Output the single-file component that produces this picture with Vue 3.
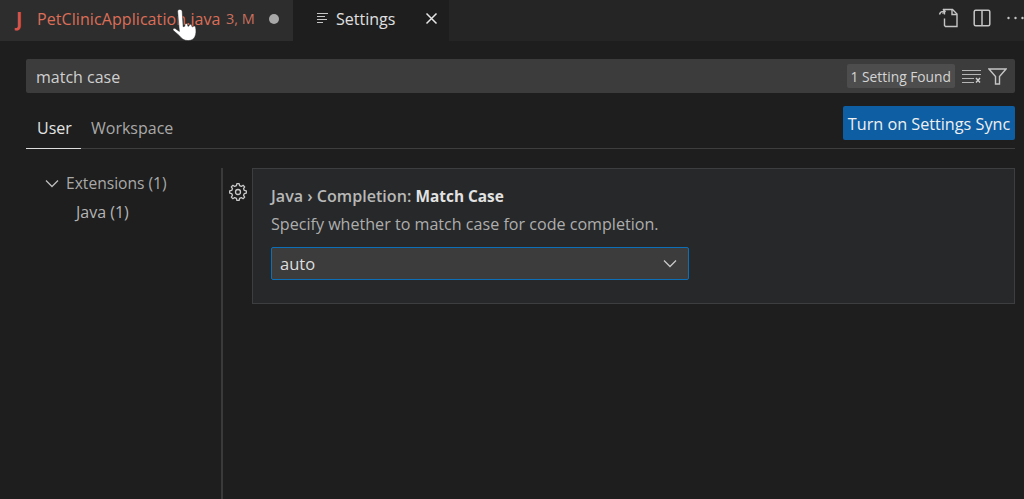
<script setup>
const cursorPath = 'M6.2 1.200c1.200-.2 2 .5 2.100 1.700L9 15.500l1.200-.4.2-1.600c.3-.9 1.600-.9 1.900.1l.2 1.500.8-.1.2-.9c.4-.8 1.500-.7 1.800.2l.3 1.200.7.1.3-.4c.5-.6 1.400-.3 1.600.6.5 3 .5 5.800-.6 8.200-.9 1.800-2.600 3-4.900 3-3.100 0-4.900-1.600-6.500-4.100L1.600 18.500c-.5-.9.4-2 1.500-1.500l3.100 2.400L4.900 3c-.1-.9.400-1.700 1.300-1.800Z'

// Eight-lobed cog outline for the settings gear
const gearPath = (() => {
  const pts = []
  const teeth = 8
  for (let i = 0; i < teeth; i++) {
    const a = (i / teeth) * Math.PI * 2 - Math.PI / 2
    const step = Math.PI / teeth
    const at = (r, t) => `${(9 + r * Math.cos(t)).toFixed(2)} ${(9 + r * Math.sin(t)).toFixed(2)}`
    pts.push(`${i === 0 ? 'M' : 'L'}${at(6.5, a - step * 0.62)}`)
    pts.push(`L${at(8.4, a - step * 0.34)}`)
    pts.push(`L${at(8.4, a + step * 0.34)}`)
    pts.push(`L${at(6.5, a + step * 0.62)}`)
  }
  return pts.join(' ') + ' Z'
})()
</script>

<template>
  <div class="app">
    <header class="tabbar">
      <div class="tab tab-java">
        <span class="java-j">J</span>
        <span class="java-name">PetClinicApplication.java</span>
        <span class="java-meta">3, M</span>
        <span class="dirty"></span>
      </div>
      <div class="tab tab-settings">
        <svg class="settings-ico" width="14" height="14" viewBox="0 0 14 14" fill="none" stroke="#c5c5c5" stroke-width="1.100">
          <path d="M1 1.500h11M1 4.500h8M1 7.500h10M1 10.500h6" />
        </svg>
        <span class="settings-name">Settings</span>
        <svg class="close-ico" width="13" height="13" viewBox="0 0 13 13" fill="none" stroke="#e6e6e6" stroke-width="1.500">
          <path d="M1.500 1.500l10 10M11.500 1.500l-10 10" />
        </svg>
      </div>
      <div class="actions">
        <svg class="new-file" width="21" height="20" viewBox="0 0 21 20" fill="none" stroke="#c5c5c5" stroke-width="1.400">
          <path d="M6.500 6.500V1.500h8l4.500 4.500v12.500H7.500l-1-1V10.500" />
          <path d="M14 1.500V6.500h5" />
          <path d="M1.500 6.500c.5-2.500 2.500-3.500 5-3M5 1l2 2.500-2.500 2" />
        </svg>
        <svg class="split" width="18" height="18" viewBox="0 0 18 18" fill="none" stroke="#c5c5c5" stroke-width="1.500">
          <rect x="1.200" y="1.200" width="15.600" height="15.600" rx="1.500" />
          <path d="M9 1.200v15.600" />
        </svg>
        <svg class="more" width="17" height="4" viewBox="0 0 17 4" fill="#c5c5c5">
          <circle cx="1.500" cy="2" r="1.200" /><circle cx="8.500" cy="2" r="1.200" /><circle cx="15.500" cy="2" r="1.200" />
        </svg>
      </div>
    </header>

    <main class="editor">
      <div class="search">
        <span class="query">match case</span>
        <span class="found">1 Setting Found</span>
        <svg class="clear-ico" width="19" height="14" viewBox="0 0 19 14" fill="none" stroke="#b5b5b5" stroke-width="1.200">
          <path d="M0 1.500h19M0 5.500h19M0 9.500h12M0 13.500h12" />
          <path d="M14 9l4 4.500M18 9l-4 4.500" stroke="#d0d0d0" stroke-width="1.400" />
        </svg>
        <svg class="filter-ico" width="19" height="17" viewBox="0 0 19 17" fill="none" stroke="#c5c5c5" stroke-width="1.400">
          <path d="M1 1h17l-6.500 7.500v7.500h-4V8.500Z" />
        </svg>
      </div>

      <div class="scope-row">
        <nav class="scopes">
          <span class="scope active">User</span>
          <span class="scope">Workspace</span>
        </nav>
        <button class="sync">Turn on Settings Sync</button>
      </div>

      <div class="body">
        <aside class="tree">
          <div class="tree-item">
            <svg width="14" height="9" viewBox="0 0 14 9" fill="none" stroke="#bdbdbd" stroke-width="1.300">
              <path d="M1 1.500l6 6 6-6" />
            </svg>
            <span>Extensions (1)</span>
          </div>
          <div class="tree-child">Java (1)</div>
        </aside>
        <div class="divider"></div>
        <svg class="gear" width="18" height="18" viewBox="0 0 18 18" fill="none" stroke="#c8c8c8" stroke-width="1.300" stroke-linejoin="round">
          <path :d="gearPath" />
          <circle cx="9" cy="9" r="2.500" />
        </svg>
        <section class="card">
          <div class="title">Java › Completion: <strong>Match Case</strong></div>
          <div class="desc">Specify whether to match case for code completion.</div>
          <div class="select">
            <span>auto</span>
            <svg width="14" height="9" viewBox="0 0 14 9" fill="none" stroke="#c8c8c8" stroke-width="1.300">
              <path d="M1 1.500l6 6 6-6" />
            </svg>
          </div>
        </section>
      </div>
    </main>

    <svg class="cursor" width="27" height="35" viewBox="0 0 20 29" preserveAspectRatio="none">
      <path :d="cursorPath" fill="#fff" stroke="#222" stroke-width=".4" />
    </svg>
  </div>
</template>

<style>
html, body { margin: 0; background: #1e1e1e; overflow: hidden; }
</style>

<style scoped>
.app {
  position: relative;
  width: 1024px;
  height: 499px;
  overflow: hidden;
  background: #1e1e1e;
  color: #ccc;
  font-family: "Open Sans", "Noto Sans", sans-serif;
  font-size: 16px;
}
.tabbar { display: flex; height: 41px; background: #252526; }
.tab { display: flex; align-items: center; height: 41px; box-sizing: border-box; padding-bottom: 4px; }
.tab-java { width: 293px; background: #2d2d2d; padding-left: 16px; }
.java-j { width: 21px; color: #d9534a; font-weight: 700; font-size: 19px; }
.java-name { color: #dc6e58; width: 189px; font-size: 16px; letter-spacing: .08px; white-space: nowrap; }
.java-meta { color: #c8705e; font-size: 14.500px; white-space: nowrap; }
.dirty { width: 10px; height: 10px; border-radius: 50%; background: #a8a8a8; margin-left: 14px; }
.tab-settings { width: 156px; background: #1e1e1e; padding-left: 23px; }
.settings-ico, .close-ico { flex: none; }
.settings-name { color: #e0e0e0; margin-left: 6px; width: 89px; flex: none; }
.actions { margin-left: auto; display: flex; align-items: center; height: 35px; }
.new-file { margin-right: 14px; }
.split { margin-right: 16px; }
.editor { padding: 18px 9px 0 26px; }
.search {
  display: flex; align-items: center; height: 34px; background: #3c3c3c; border-radius: 2px;
  padding: 0 8px 0 10px;
}
.query { color: #cfcfcf; margin-right: auto; font-size: 16px; padding-top: 1px; }
.found { background: #4d4d4d; color: #d4d4d4; font-size: 13.800px; padding: 0 4px; border-radius: 2px; height: 24px; line-height: 25px; margin-right: 7px; }
.clear-ico { margin-right: 7px; }
.scope-row { display: flex; justify-content: space-between; align-items: flex-end; height: 55px; border-bottom: 1px solid #3e3e3e; }
.scopes { display: flex; }
.scope { height: 39px; line-height: 39px; color: #a9a9a9; font-size: 16px; box-sizing: border-box; }
.scope.active { color: #e4e4e4; width: 55px; padding-left: 11px; margin-right: 10px; border-bottom: 1px solid #ddd; margin-bottom: -1px; height: 40px; }
.sync {
  align-self: flex-start; margin-top: 13px; width: 172px; height: 34px; background: #0e5ea3; color: #f0f0f0; border: 0; border-radius: 2px;
  font: inherit; font-size: 16.200px; padding: 2px 0 0; white-space: nowrap;
}
.body { display: flex; align-items: flex-start; margin-top: 19px; }
.tree { width: 195px; padding-top: 4px; flex: none; }
.tree-item { display: flex; align-items: center; gap: 7px; padding-left: 19px; height: 22px; color: #a9a9a9; font-size: 15.600px; }
.tree-child { padding-left: 50px; height: 22px; margin-top: 7px; color: #b4b4b4; font-size: 16px; }
.divider { width: 2px; height: 340px; background: #3a3a3a; flex: none; }
.gear { margin: 15px 5px 0 6px; flex: none; }
.card {
  flex: 1; height: 136px; box-sizing: border-box; background: #262829; border: 1px solid #3c3e3f; padding: 17px 18px;
}
.title { color: #b8b8b8; font-weight: 600; font-size: 16.100px; line-height: 20px; white-space: nowrap; }
.title strong { color: #e2e2e2; font-weight: 700; font-size: 15.400px; }
.desc { color: #aeaeae; font-size: 16.100px; line-height: 20px; margin-top: 7px; white-space: nowrap; }
.select {
  display: flex; align-items: center; justify-content: space-between; margin-top: 13px;
  width: 418px; height: 33px; box-sizing: border-box; background: #3c3c3c; border: 1px solid #0d6fb8; border-radius: 2px;
  padding: 0 11px 0 8px; color: #dedede; font-size: 16.500px;
}
.cursor { position: absolute; left: 171px; top: 8px; }
</style>
